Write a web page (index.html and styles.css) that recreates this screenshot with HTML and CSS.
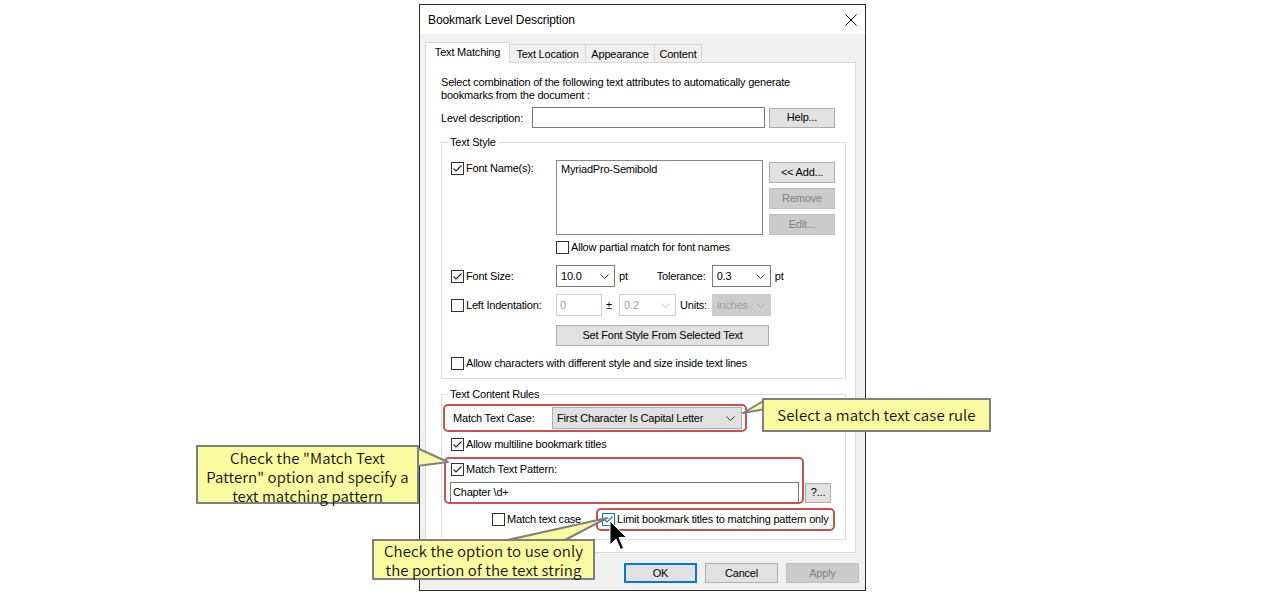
FILE: index.html
```html
<!DOCTYPE html>
<html>
<head>
<meta charset="utf-8">
<title>Bookmark Level Description</title>
<link rel="stylesheet" href="styles.css">
</head>
<body>
<div class="stage">
  <div class="dialog">
    <div class="titlebar">
      <span class="title">Bookmark Level Description</span>
      <svg class="close" width="12" height="12" viewBox="0 0 12 12"><path d="M0.5 0.5 L11.5 11.5 M11.5 0.5 L0.5 11.5" stroke="#000" stroke-width="1" fill="none"/></svg>
    </div>
    <div class="body">
      <div class="tabs">
        <div class="tab active t1">Text Matching</div>
        <div class="tab t2">Text Location</div>
        <div class="tab t3">Appearance</div>
        <div class="tab t4">Content</div>
      </div>
      <div class="panel">
        <p class="intro">Select combination of the following text attributes to automatically generate<br>bookmarks from the document :</p>
        <div class="row level">
          <span class="lbl-level">Level description:</span>
          <span class="input in-level"></span>
          <span class="btn btn-help">Help...</span>
        </div>

        <fieldset class="group g-style">
          <legend>Text Style</legend>
          <div class="fontrow">
            <div class="lblcol">
              <span class="cb"><svg width="11" height="11" viewBox="0 0 11 11"><path d="M1.5 5.5 L4 8 L9.5 2.5" stroke="#222" stroke-width="1.1" fill="none"/></svg></span>
              <span class="cbt">Font Name(s):</span>
            </div>
            <div class="listbox">MyriadPro-Semibold</div>
            <div class="btncol">
              <span class="btn btn-side">&lt;&lt; Add...</span>
              <span class="btn btn-side dis">Remove</span>
              <span class="btn btn-side dis">Edit...</span>
            </div>
          </div>
          <div class="check partial">
            <span class="cb"></span><span class="cbt">Allow partial match for font names</span>
          </div>
          <div class="row sizerow">
            <div class="lblcol mid">
              <span class="cb"><svg width="11" height="11" viewBox="0 0 11 11"><path d="M1.5 5.5 L4 8 L9.5 2.5" stroke="#222" stroke-width="1.1" fill="none"/></svg></span>
              <span class="cbt">Font Size:</span>
            </div>
            <span class="select sel-size">10.0<svg class="chev" width="9" height="5" viewBox="0 0 9 5"><path d="M0.5 0.5 L4.5 4.5 L8.5 0.5" stroke="#333" fill="none"/></svg></span>
            <span class="unit">pt</span>
            <span class="tol">Tolerance:</span>
            <span class="select sel-tol">0.3<svg class="chev" width="9" height="5" viewBox="0 0 9 5"><path d="M0.5 0.5 L4.5 4.5 L8.5 0.5" stroke="#333" fill="none"/></svg></span>
            <span class="unit">pt</span>
          </div>
          <div class="row indrow">
            <div class="lblcol mid">
              <span class="cb"></span>
              <span class="cbt">Left Indentation:</span>
            </div>
            <span class="input in-ind dis">0</span>
            <span class="pm">±</span>
            <span class="select sel-ind dis">0.2<svg class="chev" width="9" height="5" viewBox="0 0 9 5"><path d="M0.5 0.5 L4.5 4.5 L8.5 0.5" stroke="#c8c8c8" fill="none"/></svg></span>
            <span class="units">Units:</span>
            <span class="select sel-units dis">inches<svg class="chev" width="9" height="5" viewBox="0 0 9 5"><path d="M0.5 0.5 L4.5 4.5 L8.5 0.5" stroke="#b0b0b0" fill="none"/></svg></span>
          </div>
          <div class="row setrow">
            <span class="btn btn-set">Set Font Style From Selected Text</span>
          </div>
          <div class="check allowchars">
            <span class="cb"></span><span class="cbt">Allow characters with different style and size inside text lines</span>
          </div>
        </fieldset>

        <fieldset class="group g-rules">
          <legend>Text Content Rules</legend>
          <div class="row caserow">
            <span class="lbl-case">Match Text Case:</span>
            <span class="select sel-case">First Character Is Capital Letter<svg class="chev" width="9" height="5" viewBox="0 0 9 5"><path d="M0.5 0.5 L4.5 4.5 L8.5 0.5" stroke="#333" fill="none"/></svg></span>
          </div>
          <div class="check multiline">
            <span class="cb"><svg width="11" height="11" viewBox="0 0 11 11"><path d="M1.5 5.5 L4 8 L9.5 2.5" stroke="#222" stroke-width="1.1" fill="none"/></svg></span><span class="cbt">Allow multiline bookmark titles</span>
          </div>
          <div class="check pattern">
            <span class="cb"><svg width="11" height="11" viewBox="0 0 11 11"><path d="M1.5 5.5 L4 8 L9.5 2.5" stroke="#222" stroke-width="1.1" fill="none"/></svg></span><span class="cbt">Match Text Pattern:</span>
          </div>
          <div class="row patrow">
            <span class="input in-pat">Chapter \d+</span>
            <span class="btn btn-q">?...</span>
          </div>
          <div class="row bottomrow">
            <div class="check mtc">
              <span class="cb"></span><span class="cbt">Match text case</span>
            </div>
            <div class="check limit">
              <span class="cb hover"><svg width="11" height="11" viewBox="0 0 11 11"><path d="M1.5 5.5 L4 8 L9.5 2.5" stroke="#2a6bb8" stroke-width="1.1" fill="none"/></svg></span><span class="cbt">Limit bookmark titles to matching pattern only</span>
            </div>
          </div>
        </fieldset>
      </div>
      <div class="actions">
        <span class="btn btn-act ok">OK</span>
        <span class="btn btn-act">Cancel</span>
        <span class="btn btn-act dis">Apply</span>
      </div>
    </div>
  </div>

  <div class="hl hl1"></div>
  <div class="hl hl2"></div>
  <div class="hl hl3"></div>

  <svg class="pointer" width="1280" height="600" viewBox="0 0 1280 600">
    <polygon points="743,413 765,400 765,409" fill="#fafaa0" stroke="#808080" stroke-width="2" stroke-linejoin="round"/>
    <polygon points="417,448 417,466 448,462" fill="#fafaa0" stroke="#808080" stroke-width="2" stroke-linejoin="round"/>
    <polygon points="503,541 563,541 607,518" fill="#fafaa0" stroke="#808080" stroke-width="2" stroke-linejoin="round"/>
  </svg>

  <div class="callout c1">Select a match text case rule</div>
  <div class="callout c2">Check the "Match Text<br>Pattern" option and specify a<br>text matching pattern</div>
  <div class="callout c3">Check the option to use only<br>the portion of the text string</div>

  <svg class="cursor" width="20" height="32" viewBox="0 0 20 32">
    <path d="M1 1 L1 25 L7 19 L11.5 29.5 L14.5 28 L10 17.5 L17.5 17.5 Z" fill="#000" stroke="#fff" stroke-width="1" stroke-linejoin="miter"/>
  </svg>
</div>
</body>
</html>
```

FILE: styles.css
```css
* { box-sizing: border-box; }
html, body { margin: 0; padding: 0; background: #fff; }
body {
  font-family: "Liberation Sans", Arial, sans-serif;
  font-size: 11px;
  letter-spacing: -0.2px;
  color: #000;
  line-height: 13px;
}
.stage { position: relative; width: 1280px; height: 600px; overflow: hidden; }

.dialog {
  margin: 4px 0 0 419px;
  width: 447px;
  height: 587px;
  border: 1px solid #2e2e2e;
  background: #f0f0f0;
  display: flex;
  flex-direction: column;
}
.titlebar {
  height: 29px;
  background: #fff;
  display: flex;
  align-items: center;
  justify-content: space-between;
  padding: 1px 8px 0 8px;
  font-size: 12px;
  letter-spacing: -0.1px;
}
.close { display: block; }

.body { padding: 8px 0 0 5px; flex: 1; }
.tabs { display: flex; align-items: flex-end; height: 20px; }
.tab {
  height: 18px;
  border: 1px solid #d9d9d9;
  border-bottom: none;
  border-left: none;
  display: flex;
  align-items: center;
  justify-content: center;
  background: #f0f0f0;
  padding-top: 1px;
}
.tab.active {
  height: 21px;
  margin-bottom: -1px;
  background: #fff;
  border-left: 1px solid #d9d9d9;
  position: relative;
  z-index: 1;
  padding-top: 0;
  padding-bottom: 2px;
}
.t1 { width: 85px; }
.t2 { width: 76px; }
.t3 { width: 69px; }
.t4 { width: 47px; }

.panel {
  width: 431px;
  height: 491px;
  border: 1px solid #d9d9d9;
  background: #fff;
  padding: 13px 0 0 15px;
}
.intro { margin: 0; line-height: 13px; }
.row { display: flex; align-items: center; }
.level { margin-top: 5px; height: 21px; }
.lbl-level { width: 91px; padding-top: 1px; }
.input {
  display: flex;
  align-items: center;
  height: 21px;
  border: 1px solid #7a7a7a;
  background: #fff;
  padding-left: 2px;
}
.in-level { width: 233px; }
.btn {
  display: flex;
  align-items: center;
  justify-content: center;
  background: #e1e1e1;
  border: 1px solid #adadad;
  height: 21px;
}
.btn.dis { background: #cccccc; border-color: #bfbfbf; color: #838383; }
.btn-help { width: 66px; height: 20px; margin-left: 4px; }

.group {
  margin: 8px 0 0 0;
  width: 405px;
  border: 1px solid #dcdcdc;
  padding: 11px 0 8px 9px;
}
.group legend {
  padding: 0 2px;
  margin-left: -3px;
  line-height: 13px;
}
.g-rules { margin-top: 9px; padding-top: 6px; padding-bottom: 13px; }

.cb {
  display: inline-flex;
  align-items: center;
  justify-content: center;
  width: 13px;
  height: 13px;
  border: 1px solid #333;
  background: #fff;
  flex: none;
}
.cb svg { display: block; }
.cb.hover { border-color: #0078d7; }
.cbt { margin-left: 2px; white-space: nowrap; }
.check { display: flex; align-items: center; height: 13px; }

.fontrow { display: flex; align-items: flex-start; height: 75px; }
.lblcol { width: 105px; display: flex; align-items: center; flex: none; }
.fontrow .lblcol { margin-top: 2px; }
.listbox {
  width: 207px;
  height: 75px;
  border: 1px solid #828790;
  padding: 2px 4px;
}
.btncol { margin-left: 6px; margin-top: 2px; display: flex; flex-direction: column; gap: 5px; }
.btn-side { width: 66px; height: 21px; }

.partial { margin-top: 6px; padding-left: 105px; }
.sizerow { margin-top: 11px; height: 22px; }
.select {
  display: flex;
  align-items: center;
  justify-content: space-between;
  height: 22px;
  border: 1px solid #7a7a7a;
  background: #fff;
  padding: 0 5px 0 4px;
}
.chev { display: block; }
.sel-size { width: 59px; }
.sel-tol { width: 59px; }
.unit { margin-left: 4px; }
.tol { margin-left: 29px; width: 55px; }
.indrow { margin-top: 7px; height: 22px; }
.input.dis { border-color: #cccccc; color: #a0a0a0; padding-left: 3px; }
.in-ind { width: 46px; height: 22px; }
.pm { margin-left: 4px; width: 13px; }
.select.dis { border-color: #cccccc; color: #a0a0a0; }
.sel-ind { width: 57px; }
.units { margin-left: 4px; width: 32px; }
.sel-units { width: 59px; background: #cccccc; color: #8a8a8a; }
.setrow { margin-top: 9px; padding-left: 105px; }
.btn-set { width: 213px; height: 21px; }
.allowchars { margin-top: 11px; }

.caserow { height: 22px; }
.lbl-case { width: 101px; padding-left: 2px; }
.sel-case { width: 190px; background: #e1e1e1; border-color: #adadad; padding-right: 6px; }
.multiline { margin-top: 9px; }
.pattern { margin-top: 12px; }
.patrow { margin-top: 6px; height: 21px; }
.in-pat { width: 349px; margin-left: -1px; border-color: #7a7a7a; padding-left: 2px; }
.btn-q { width: 26px; height: 20px; margin-left: 6px; }
.bottomrow { margin-top: 10px; height: 13px; }
.mtc { margin-left: 41px; width: 110px; }

.actions {
  display: flex;
  justify-content: flex-end;
  gap: 8px;
  margin-top: 10px;
  padding-right: 6px;
}
.btn-act { width: 73px; height: 20px; }
.btn-act.ok { border: 2px solid #0078d7; }

/* annotations overlaid on the screenshot */
.hl {
  position: absolute;
  border: 2px solid #c9514f;
  border-radius: 5px;
}
.hl1 { left: 443px; top: 404px; width: 304px; height: 28px; }
.hl2 { left: 444px; top: 457px; width: 360px; height: 47px; }
.hl3 { left: 596px; top: 508px; width: 239px; height: 23px; }

.pointer { position: absolute; left: 0; top: 0; }

.callout {
  position: absolute;
  background: #fafaa0;
  border: 2px solid #808080;
  font-family: "Noto Sans CJK KR", "Noto Sans", sans-serif;
  font-size: 15px;
  font-weight: 350;
  letter-spacing: 0.1px;
  line-height: 19px;
  color: #111;
  text-align: center;
}
.c1 { left: 762px; top: 398px; width: 229px; height: 34px; line-height: 30px; }
.c2 { left: 196px; top: 445px; width: 223px; height: 59px; padding-top: 1px; }
.c3 { left: 372px; top: 539px; width: 223px; height: 41px; }

.cursor { position: absolute; left: 609px; top: 520px; }
```
